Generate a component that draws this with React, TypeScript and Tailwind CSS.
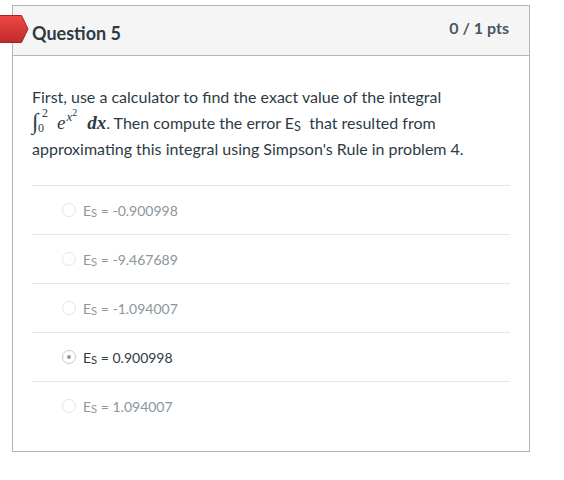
import React from "react";

const options = [
  { value: "-0.900998", selected: false },
  { value: "-9.467689", selected: false },
  { value: "-1.094007", selected: false },
  { value: "0.900998", selected: true },
  { value: "1.094007", selected: false },
];

function Flag() {
  return (
    <svg className="absolute left-0 top-[15px]" width="29" height="28" viewBox="0 0 29 28">
      <defs>
        <linearGradient id="flagGrad" x1="0" y1="0" x2="0" y2="1">
          <stop offset="0" stopColor="#ee4a45" />
          <stop offset="1" stopColor="#c02a2a" />
        </linearGradient>
      </defs>
      <polygon
        points="-1,0.5 21.5,0.5 28,14 21.5,27.5 -1,27.5"
        fill="url(#flagGrad)"
        stroke="#a82424"
        strokeWidth="1"
      />
    </svg>
  );
}

function Es() {
  return (
    <span>
      E<sub className="text-[0.8em] -bottom-[0.15em]">S</sub>
    </span>
  );
}

function Radio({ selected }: { selected: boolean }) {
  return (
    <span
      className={
        "flex h-[14px] w-[14px] items-center justify-center rounded-full border bg-white " +
        (selected ? "border-[#c4c8cc]" : "border-[#e3e5e7]")
      }
    >
      {selected && <span className="h-[4px] w-[4px] rounded-full bg-[#8f969c]" />}
    </span>
  );
}

// integral from 0 to 2 of e^(x^2) dx
function Integral() {
  return (
    <span className="font-['Liberation_Serif',serif] leading-none">
      <span className="relative inline-block w-[25px] text-[23px] italic">
        ∫
        <span className="absolute left-[10px] -top-[3px] text-[12px] not-italic">2</span>
        <span className="absolute left-[6px] top-[12px] text-[12px] not-italic">0</span>
      </span>
      <span className="text-[19px] italic">e</span>
      <sup className="ml-[1px] text-[13px] -top-[0.65em]">
        <i>x</i>
        <sup className="text-[10px] -top-[0.5em]">2</sup>
      </sup>
      <span className="ml-[10px] text-[19px] font-semibold italic">dx</span>
    </span>
  );
}

export default function App() {
  return (
    <div className="relative min-h-[480px] w-[564px] bg-white font-['Lato','Noto_Sans',sans-serif]">
      <div className="pl-[12px] pt-[5px]">
        <div className="w-[518px] border border-[#b5b5b5]">
          {/* Header */}
          <div className="flex h-[50px] justify-between border-b border-[#b5b5b5] bg-[#f5f5f5] pl-[19px] pr-[20px]">
            <h2 className="pt-[16px] text-[18px] font-bold leading-[22px] text-[#2d3b45]">Question 5</h2>
            <div className="pt-[12px] text-[16px] font-bold leading-[20px] text-[#4a565f]">0 / 1 pts</div>
          </div>

          {/* Body */}
          <div className="px-[19px] pb-[21px] pt-[28px]">
            <div className="text-[16px] leading-[25px] text-[#2d3b45]">
              <p>First, use a calculator to find the exact value of the integral</p>
              <p className="leading-[27px]">
                <Integral />. Then compute the error <Es />
                {"\u00a0 "}that resulted from
              </p>
              <p>approximating this integral using Simpson's Rule in problem 4.</p>
            </div>

            {/* Answers */}
            <div className="mt-[24px]">
              {options.map((o) => (
                <div
                  key={o.value}
                  className="flex h-[49px] items-center border-t border-[#e6e6e6] pl-[30px]"
                >
                  <Radio selected={o.selected} />
                  <span
                    className={
                      "ml-[7px] text-[14px] " + (o.selected ? "text-[#2d3b45]" : "text-[#8b969e]")
                    }
                  >
                    <Es /> = {o.value}
                  </span>
                </div>
              ))}
            </div>
          </div>
        </div>
      </div>
      <Flag />
    </div>
  );
}
